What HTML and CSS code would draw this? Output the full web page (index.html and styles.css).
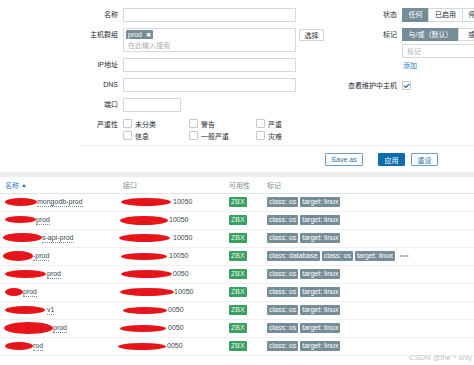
FILE: index.html
```html
<!DOCTYPE html>
<html lang="zh-CN">
  <head>
    <meta charset="UTF-8" />
    <meta name="viewport" content="width=device-width, initial-scale=1.0" />
    <title>主机</title>
    <link rel="stylesheet" href="styles.css">
  </head>
  <body>
    <div class="page">
      <!-- Filter -->
      <div class="filter">
        <div class="filter-cols">
          <!-- left column -->
          <div class="form-grid form-left">
            <p class="label">名称</p>
            <div class="field"><input class="input input-wide" type="text" /></div>

            <p class="label">主机群组</p>
            <div class="field field-row">
              <div class="multiselect">
                <span class="chip">prod <span class="chip-x">✖</span></span>
                <span class="ms-placeholder">在此输入搜索</span>
              </div>
              <button class="btn-grey">选择</button>
            </div>

            <p class="label">IP地址</p>
            <div class="field"><input class="input input-wide" type="text" /></div>

            <p class="label">DNS</p>
            <div class="field"><input class="input input-wide" type="text" /></div>

            <p class="label">端口</p>
            <div class="field"><input class="input input-short" type="text" /></div>

            <p class="label">严重性</p>
            <div class="severity">
              <label class="check"><span class="box"></span>未分类</label>
              <label class="check"><span class="box"></span>警告</label>
              <label class="check"><span class="box"></span>严重</label>
              <label class="check"><span class="box"></span>信息</label>
              <label class="check"><span class="box"></span>一般严重</label>
              <label class="check"><span class="box"></span>灾难</label>
            </div>
          </div>

          <!-- right column -->
          <div class="form-grid form-right">
            <p class="label">状态</p>
            <div class="seg">
              <span class="seg-btn on w-any">任何</span>
              <span class="seg-btn w-on">已启用</span>
              <span class="seg-btn w-off">停用</span>
            </div>

            <p class="label label-tag">标记</p>
            <div class="tag-stack">
              <div class="seg seg-sm">
                <span class="seg-btn on w-andor">与/或（默认）</span>
                <span class="seg-btn w-or">或</span>
              </div>
              <input class="input input-tag" type="text" placeholder="标记" />
              <a class="link" href="#">添加</a>
            </div>

            <p class="label label-maint">查看维护中主机</p>
            <div class="maint">
              <span class="box box-on">
                <svg width="9" height="9" viewBox="0 0 9 9">
                  <polyline points="2,4.6 3.8,6.4 7.2,2.8" fill="none" stroke="#1f5f96" stroke-width="1.2" />
                </svg>
              </span>
            </div>
          </div>
        </div>

        <!-- Buttons -->
        <div class="filter-actions">
          <button class="btn-alt btn-save">Save as</button>
          <button class="btn-main">应用</button>
          <button class="btn-alt btn-reset">重设</button>
        </div>
      </div>

      <!-- Hosts table -->
      <div class="hosts">
        <table class="list">
          <colgroup>
            <col class="c-name" />
            <col class="c-iface" />
            <col class="c-avail" />
            <col />
          </colgroup>
          <thead>
            <tr>
              <th class="sorted">名称 <span class="arrow"></span></th>
              <th>接口</th>
              <th>可用性</th>
              <th>标记</th>
            </tr>
          </thead>
          <tbody>
            <tr>
              <td><span class="redact n1"></span><span class="host">mongodb-prod</span></td>
              <td><span class="redact i1"></span>10050</td>
              <td><span class="zbx">ZBX</span></td>
              <td><span class="tag">class: os</span><span class="tag">target: linux</span></td>
            </tr>
            <tr>
              <td><span class="redact n2"></span><span class="host">prod</span></td>
              <td><span class="redact i2"></span>10050</td>
              <td><span class="zbx">ZBX</span></td>
              <td><span class="tag">class: os</span><span class="tag">target: linux</span></td>
            </tr>
            <tr>
              <td><span class="redact n3"></span><span class="host">s-api-prod</span></td>
              <td><span class="redact i3"></span>10050</td>
              <td><span class="zbx">ZBX</span></td>
              <td><span class="tag">class: os</span><span class="tag">target: linux</span></td>
            </tr>
            <tr>
              <td><span class="redact n4"></span><span class="host">-prod</span></td>
              <td><span class="redact i4"></span>10050</td>
              <td><span class="zbx">ZBX</span></td>
              <td><span class="tag">class: database</span><span class="tag">class: os</span><span class="tag">target: linux</span><span class="more">•••</span></td>
            </tr>
            <tr>
              <td><span class="redact n5"></span><span class="host">prod</span></td>
              <td><span class="redact i5"></span>0050</td>
              <td><span class="zbx">ZBX</span></td>
              <td><span class="tag">class: os</span><span class="tag">target: linux</span></td>
            </tr>
            <tr>
              <td><span class="redact n6"></span><span class="host">prod</span></td>
              <td><span class="redact i6"></span>10050</td>
              <td><span class="zbx">ZBX</span></td>
              <td><span class="tag">class: os</span><span class="tag">target: linux</span></td>
            </tr>
            <tr>
              <td><span class="redact n7"></span><span class="host">v1</span></td>
              <td><span class="redact i7"></span>0050</td>
              <td><span class="zbx">ZBX</span></td>
              <td><span class="tag">class: os</span><span class="tag">target: linux</span></td>
            </tr>
            <tr>
              <td><span class="redact n8"></span><span class="host">prod</span></td>
              <td><span class="redact i8"></span>0050</td>
              <td><span class="zbx">ZBX</span></td>
              <td><span class="tag">class: os</span><span class="tag">target: linux</span></td>
            </tr>
            <tr>
              <td><span class="redact n9"></span><span class="host">rod</span></td>
              <td><span class="redact i9"></span>0050</td>
              <td><span class="zbx">ZBX</span></td>
              <td><span class="tag">class: os</span><span class="tag">target: linux</span></td>
            </tr>
          </tbody>
        </table>
        <p class="watermark">CSDN @the丶only</p>
      </div>
    </div>
  </body>
</html>
```

FILE: styles.css
```css
* {
  margin: 0;
  padding: 0;
  box-sizing: border-box;
}
html,
body {
  overflow: hidden;
}
body {
  width: 474px;
  height: 365px;
  background-color: #ebeef0;
  font-family: "Liberation Sans", "Noto Sans CJK SC", sans-serif;
  font-size: 7px;
  color: #1f2c33;
}

.page {
  width: 474px;
}

/* Filter */
.filter {
  height: 172px;
  padding-top: 8px;
  background-color: #fff;
  overflow: hidden;
}

.filter-cols {
  display: flex;
  height: 132px;
}

.form-grid {
  display: grid;
  column-gap: 5px;
  row-gap: 6px;
  align-content: start;
  flex-shrink: 0;
}

.form-left {
  width: 324px;
  grid-template-columns: 118px 201px;
}

.form-right {
  grid-template-columns: 73px 120px;
}

.label {
  text-align: right;
  line-height: 14px;
  white-space: nowrap;
}

.label-tag {
  line-height: 13px;
}

.label-maint {
  line-height: 17px;
  margin-top: 1px;
}

.field-row {
  display: flex;
  gap: 3px;
  align-items: flex-start;
}

.input {
  display: block;
  height: 14px;
  border: 1px solid #d3d9dc;
  background-color: #fff;
  font-family: inherit;
  font-size: 7px;
  padding: 0 4px;
  color: #1f2c33;
}
.input:focus {
  outline: none;
}
.input::placeholder {
  color: #a9b1b5;
}

.input-wide {
  width: 173px;
}

.input-short {
  width: 58px;
}

.multiselect {
  width: 173px;
  height: 24px;
  border: 1px solid #d3d9dc;
  padding: 1px 2px;
  display: flex;
  flex-direction: column;
  align-items: flex-start;
  gap: 1px;
}

.chip {
  height: 9px;
  line-height: 9px;
  padding: 0 2px;
  background-color: #768d99;
  color: #fff;
  border-radius: 1px;
  width: 27px;
}

.chip-x {
  font-size: 6px;
  margin-left: 2px;
}

.ms-placeholder {
  color: #a9b1b5;
  line-height: 11px;
  padding-left: 2px;
}

.btn-grey {
  width: 25px;
  height: 12px;
  margin-top: 1px;
  border: 1px solid #cfd5d8;
  background-color: #fff;
  font-family: inherit;
  font-size: 7px;
  color: #1f2c33;
}

/* severity checkboxes */
.severity {
  display: grid;
  grid-template-columns: 66px 67px 60px;
  row-gap: 3px;
  padding-top: 1px;
}

.check {
  display: flex;
  align-items: center;
  gap: 3px;
  height: 9px;
  white-space: nowrap;
}

.box {
  display: block;
  width: 9px;
  height: 9px;
  border: 1px solid #c3cbcf;
  border-radius: 1px;
  background-color: #fff;
}

.box-on svg {
  display: block;
  margin: -1px 0 0 -1px;
}

/* segmented buttons */
.seg {
  display: flex;
  height: 14px;
}

.seg-sm {
  height: 13px;
}

.seg-btn {
  flex-shrink: 0;
  text-align: center;
  line-height: 12px;
  border: 1px solid #d3d9dc;
  margin-right: -1px;
  background-color: #fff;
  white-space: nowrap;
}

.seg-btn.on {
  background-color: #768d99;
  border-color: #768d99;
  color: #fff;
}

.seg-sm .seg-btn {
  line-height: 11px;
}

.w-any {
  width: 27px;
}
.w-on {
  width: 35px;
}
.w-off {
  width: 27px;
}
.w-andor {
  width: 57px;
}
.w-or {
  width: 27px;
}

.tag-stack {
  display: flex;
  flex-direction: column;
  align-items: flex-start;
}

.input-tag {
  width: 120px;
  margin-top: 3px;
}

.link {
  margin-top: 3px;
  line-height: 9px;
  color: #1f7bbf;
  text-decoration: none;
  padding-left: 1px;
}

.maint {
  display: flex;
  align-items: center;
  height: 17px;
  margin-top: 1px;
}

/* action buttons */
.filter-actions {
  margin-left: 80px;
  margin-top: 5px;
  border-top: 1px solid #eceff1;
  padding: 7px 36px 0 0;
  display: flex;
  justify-content: flex-end;
  gap: 6px;
}

.btn-alt,
.btn-main {
  height: 13px;
  font-family: inherit;
  font-size: 7px;
  border-radius: 1px;
}

.btn-alt {
  width: 27px;
  border: 1px solid #6f9cc6;
  background-color: #fff;
  color: #2d6fa9;
}

.btn-save {
  width: 38px;
  margin-right: 9px;
}

.btn-main {
  width: 27px;
  border: 1px solid #0e6cb0;
  background-color: #0e6cb0;
  color: #fff;
}

/* Hosts table */
.hosts {
  position: relative;
  margin-top: 5px;
  height: 188px;
  background-color: #fff;
}

.list {
  width: 100%;
  border-collapse: collapse;
  table-layout: fixed;
}

.c-name {
  width: 118px;
}
.c-iface {
  width: 106px;
}
.c-avail {
  width: 38px;
}

.list th {
  height: 16px;
  padding-left: 5px;
  text-align: left;
  font-weight: normal;
  color: #7b8e98;
  border-bottom: 1px solid #dfe4e7;
  white-space: nowrap;
}

.list th.sorted {
  color: #1f7bbf;
}

.arrow {
  display: inline-block;
  width: 0;
  height: 0;
  border-left: 2.5px solid transparent;
  border-right: 2.5px solid transparent;
  border-bottom: 3px solid #1f7bbf;
  margin-left: 1px;
  vertical-align: 1px;
}

.list td {
  height: 18px;
  padding-left: 5px;
  border-bottom: 1px solid #eef0f2;
  white-space: nowrap;
  overflow: hidden;
  color: #3c474d;
}

.host {
  border-bottom: 1px dotted #7b8e98;
  line-height: 8px;
  display: inline-block;
}

/* red marker strokes over hidden names */
.redact {
  display: inline-block;
  height: 8px;
  border-radius: 50%;
  background-color: #e8141c;
  vertical-align: middle;
}

.n1 { width: 32px; margin-right: 0; }
.n2 { width: 31px; height: 7px; }
.n3 { width: 39px; height: 9px; margin-left: -2px; }
.n4 { width: 30px; height: 10px; margin-left: -2px; }
.n5 { width: 41px; margin-right: 1px; }
.n6 { width: 18px; }
.n7 { width: 40px; margin-right: 2px; }
.n8 { width: 49px; height: 12px; margin-left: -1px; }
.n9 { width: 28px; }

.i1 { width: 50px; margin: 0 2px 0 -2px; }
.i2 { width: 48px; height: 9px; margin: 0 1px 0 -3px; }
.i3 { width: 51px; margin: 0 3px 0 -4px; }
.i4 { width: 46px; height: 7px; margin: 0 2px 0 -2px; }
.i5 { width: 51px; margin: 0 1px 0 -2px; }
.i6 { width: 54px; margin: 0 0 0 -3px; }
.i7 { width: 44px; height: 7px; margin: 0 1px 0 0; }
.i8 { width: 46px; height: 7px; margin: 0 2px 0 -3px; }
.i9 { width: 48px; height: 7px; margin: 0 1px 0 -5px; }

.zbx {
  display: inline-block;
  padding: 0 2px;
  height: 10px;
  line-height: 10px;
  background-color: #3a9f5f;
  color: #eaf6ee;
  border-radius: 1px;
}

.tag {
  display: inline-block;
  padding: 0 2px;
  height: 10px;
  line-height: 10px;
  margin-right: 2px;
  background-color: #768d99;
  color: #fff;
  border-radius: 1px;
}

.more {
  margin-left: 3px;
  color: #8a9aa2;
  letter-spacing: 0.5px;
}

.watermark {
  position: absolute;
  right: 2px;
  bottom: 3px;
  color: #c2c2c2;
  font-size: 7.5px;
}
```
